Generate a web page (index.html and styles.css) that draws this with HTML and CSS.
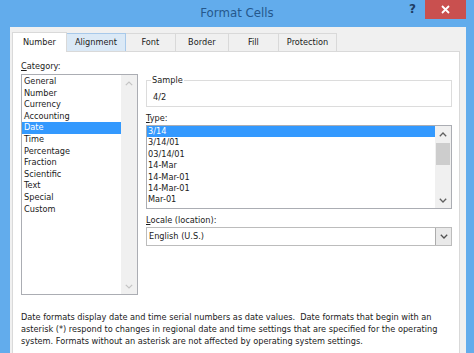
FILE: index.html
```html
<!DOCTYPE html>
<html>
<head>
<meta charset="utf-8">
<title>Format Cells</title>
<link rel="stylesheet" href="styles.css">
</head>
<body>
<div class="window">
  <div class="titlebar">
    <div></div>
    <div class="title">Format Cells</div>
    <div class="controls">
      <span class="help">?</span>
      <span class="close"><svg width="9" height="9" viewBox="0 0 9 9"><path d="M1 1 L8 8 M8 1 L1 8" stroke="#fff" stroke-width="1.8" fill="none"/></svg></span>
    </div>
  </div>
  <div class="client">
    <div class="tabs">
      <div class="tab active">Number</div>
      <div class="tab hover">Alignment</div>
      <div class="tab">Font</div>
      <div class="tab wide">Border</div>
      <div class="tab">Fill</div>
      <div class="tab">Protection</div>
    </div>
    <div class="panel">
      <div class="grid">
        <div class="label cat-label"><u>C</u>ategory:</div>
        <div class="listbox category">
          <ul class="items">
            <li>General</li>
            <li>Number</li>
            <li>Currency</li>
            <li>Accounting</li>
            <li class="selected">Date</li>
            <li>Time</li>
            <li>Percentage</li>
            <li>Fraction</li>
            <li>Scientific</li>
            <li>Text</li>
            <li>Special</li>
            <li>Custom</li>
          </ul>
          <div class="scrollbar disabled">
            <div class="arrow"><svg width="8" height="5" viewBox="0 0 8 5"><path d="M0.8 4.2 L4 1 L7.2 4.2" stroke="currentColor" stroke-width="1.2" fill="none"/></svg></div>
            <div class="track"></div>
            <div class="arrow"><svg width="8" height="5" viewBox="0 0 8 5"><path d="M0.8 0.8 L4 4 L7.2 0.8" stroke="currentColor" stroke-width="1.2" fill="none"/></svg></div>
          </div>
        </div>
        <div class="right">
          <fieldset class="sample">
            <legend>Sample</legend>
            <div class="sample-value">4/2</div>
          </fieldset>
          <div class="label type-label"><u>T</u>ype:</div>
          <div class="listbox types">
            <ul class="items">
              <li class="selected">3/14</li>
              <li>3/14/01</li>
              <li>03/14/01</li>
              <li>14-Mar</li>
              <li>14-Mar-01</li>
              <li>14-Mar-01</li>
              <li>Mar-01</li>
            </ul>
            <div class="scrollbar">
              <div class="arrow"><svg width="8" height="5" viewBox="0 0 8 5"><path d="M0.8 4.2 L4 1 L7.2 4.2" stroke="currentColor" stroke-width="1.3" fill="none"/></svg></div>
              <div class="thumb"></div>
              <div class="track"></div>
              <div class="arrow"><svg width="8" height="5" viewBox="0 0 8 5"><path d="M0.8 0.8 L4 4 L7.2 0.8" stroke="currentColor" stroke-width="1.3" fill="none"/></svg></div>
            </div>
          </div>
          <div class="label locale-label"><u>L</u>ocale (location):</div>
          <div class="select">
            <span class="select-text">English (U.S.)</span>
            <span class="select-btn"><svg width="8" height="5" viewBox="0 0 8 5"><path d="M0.8 0.8 L4 4 L7.2 0.8" stroke="currentColor" stroke-width="1.3" fill="none"/></svg></span>
          </div>
        </div>
      </div>
      <p class="desc">Date formats display date and time serial numbers as date values.&nbsp; Date formats that begin with an<br>asterisk (*) respond to changes in regional date and time settings that are specified for the operating<br>system. Formats without an asterisk are not affected by operating system settings.</p>
    </div>
  </div>
</div>
</body>
</html>
```

FILE: styles.css
```css
* { box-sizing: border-box; }

body {
  margin: 0;
  width: 474px;
  height: 353px;
  overflow: hidden;
  background: #62acec;
  font-family: "DejaVu Sans", sans-serif;
  font-size: 8.2px;
  color: #1b1b1b;
}

.window {
  display: flex;
  flex-direction: column;
  height: 353px;
}

.titlebar {
  height: 27px;
  display: grid;
  grid-template-columns: 1fr auto 1fr;
  align-items: start;
}

.title {
  font-size: 11.8px;
  line-height: 26px;
  color: #25588c;
}

.controls {
  display: flex;
  justify-content: flex-end;
  align-items: flex-start;
  padding-right: 8px;
}

.help {
  font-weight: bold;
  font-size: 12px;
  line-height: 19px;
  color: #1f3d63;
  margin-right: 9px;
}

.close {
  width: 41px;
  height: 19px;
  background: #c9504f;
  display: flex;
  align-items: center;
  justify-content: center;
}

.client {
  flex: 1;
  margin: 0 8px 0 10px;
  background: #f0f0f0;
  padding: 5px 6px 0 2px;
  display: flex;
  flex-direction: column;
}

.tabs {
  display: flex;
  align-items: flex-start;
  height: 19px;
  padding-left: 1px;
}

.tab {
  height: 18px;
  margin-top: 1px;
  line-height: 17px;
  padding: 0 8px;
  min-width: 51px;
  text-align: center;
  border: 1px solid #d9d9d9;
  border-bottom: none;
  background: #f0f0f0;
  margin-left: -1px;
  position: relative;
}

.tab.wide { min-width: 54px; }

.tab.active {
  margin-top: 0;
  height: 20px;
  line-height: 19px;
  padding: 0 10px;
  background: #fff;
  z-index: 2;
}

.tab.hover {
  background: #dbe9f6;
  border-color: #a8c9ea;
  z-index: 1;
}

.panel {
  flex: 1;
  background: #fff;
  border: 1px solid #d9d9d9;
  border-bottom: none;
  padding: 8px 7px 0 8px;
}

.grid {
  display: grid;
  grid-template-columns: 117px 306px;
  grid-template-rows: 14px 221px;
  column-gap: 8px;
}

.label {
  line-height: 12px;
  white-space: nowrap;
}

.cat-label { grid-column: 1; grid-row: 1; }
.category { grid-column: 1; grid-row: 2; }

.right {
  grid-column: 2;
  grid-row: 2;
  display: flex;
  flex-direction: column;
}

.listbox {
  border: 1px solid #abadb3;
  background: #fff;
  display: flex;
}

.items {
  flex: 1;
  list-style: none;
  margin: 0;
  padding: 1px 0 0 0;
}

.items li {
  padding-left: 2px;
  line-height: 11.6px;
  white-space: nowrap;
}

.items li.selected {
  background: #3399fe;
  color: #fff;
}

.types .items { padding: 0 0 2px 0; }
.types .items li { line-height: 11.4px; padding-left: 1px; }

.scrollbar {
  width: 16px;
  background: #f0f0f0;
  display: flex;
  flex-direction: column;
  color: #606060;
}

.scrollbar.disabled { color: #c4c4c4; }

.arrow {
  height: 16px;
  display: flex;
  align-items: center;
  justify-content: center;
}

.track { flex: 1; }

.thumb {
  height: 22px;
  margin: 1px 1px 0;
  background: #cdcdcd;
}

.sample {
  margin: 0;
  border: 1px solid #dcdcdc;
  padding: 5px 6px 3px 6px;
  min-width: 0;
}

.sample legend {
  padding: 0 1px;
  margin-left: -2px;
  line-height: 12px;
}

.sample-value {
  line-height: 12px;
}

.type-label { margin: 5px 0 1px; }
.types { height: 84px; }

.locale-label { margin: 5px 0 1px; }

.select {
  height: 19px;
  border: 1px solid #bcbcbc;
  display: flex;
  background: #fff;
}

.select-text {
  flex: 1;
  padding-left: 2px;
  line-height: 17px;
}

.select-btn {
  width: 16px;
  border-left: 1px solid #acacac;
  background: #e9e9e9;
  display: flex;
  align-items: center;
  justify-content: center;
  color: #505050;
}

.desc {
  margin: 15.5px 0 0;
  line-height: 12.2px;
  white-space: nowrap;
}
```
